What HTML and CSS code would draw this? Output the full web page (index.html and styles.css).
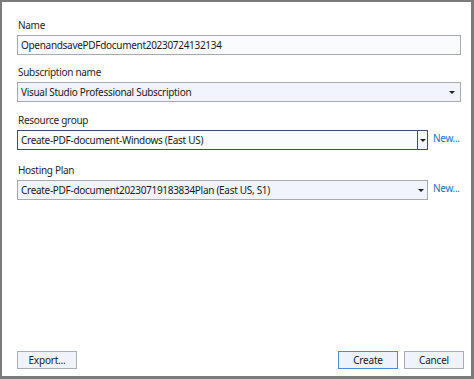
FILE: index.html
```html
<!DOCTYPE html>
<html lang="en">
<head>
    <meta charset="UTF-8">
    <title>Create App Service</title>
    <link rel="stylesheet" href="styles.css">
</head>
<body>
    <div class="dialog">
        <div class="form">
            <div class="field">
                <div class="label">Name</div>
                <div class="row">
                    <div class="input">OpenandsavePDFdocument20230724132134</div>
                </div>
            </div>

            <div class="field">
                <div class="label">Subscription name</div>
                <div class="row">
                    <div class="input select">
                        <span class="value">Visual Studio Professional Subscription</span>
                        <span class="arrow"></span>
                    </div>
                </div>
            </div>

            <div class="field gap-md">
                <div class="label">Resource group</div>
                <div class="row">
                    <div class="input combo focused">
                        <span class="value">Create-PDF-document-Windows (East US)</span>
                        <span class="drop"><span class="arrow"></span></span>
                    </div>
                    <a class="new-link" href="#">New...</a>
                </div>
            </div>

            <div class="field gap-lg">
                <div class="label">Hosting Plan</div>
                <div class="row">
                    <div class="input select short">
                        <span class="value">Create-PDF-document20230719183834Plan (East US, S1)</span>
                        <span class="arrow"></span>
                    </div>
                    <a class="new-link" href="#">New...</a>
                </div>
            </div>
        </div>

        <div class="footer">
            <button class="btn">Export...</button>
            <div class="actions">
                <button class="btn default">Create</button>
                <button class="btn">Cancel</button>
            </div>
        </div>
    </div>
</body>
</html>
```

FILE: styles.css
```css
* {
    margin: 0;
    padding: 0;
    box-sizing: border-box;
}

body {
    width: 474px;
    height: 379px;
    font-family: 'Noto Sans', 'Open Sans', sans-serif;
    font-size: 10px;
    letter-spacing: -0.3px;
    color: #1b1b1b;
    background: #fff;
}

.dialog {
    height: 100%;
    display: flex;
    flex-direction: column;
    border-style: solid;
    border-color: #7b7b7b;
    border-width: 2px 3px 3px 2px;
    background: #fff;
}

.form {
    flex: 1;
    padding: 15px 0 0 15px;
}

.field {
    margin-top: 9px;
}

.field:first-child {
    margin-top: 0;
}

.field.gap-md {
    margin-top: 10px;
}

.field.gap-lg {
    margin-top: 12px;
}

.label {
    height: 16px;
    line-height: 16px;
    margin-bottom: 2px;
    padding-left: 1px;
    color: #262626;
}

.row {
    display: flex;
    align-items: center;
}

.input {
    flex-shrink: 0;
    width: 444px;
    height: 20px;
    line-height: 18px;
    padding: 0 3px;
    border: 1px solid #a6a9ae;
    background: #fafbfd;
    white-space: nowrap;
    overflow: hidden;
}

.select {
    display: flex;
    justify-content: space-between;
    align-items: center;
    background: #f1f4fb;
    padding-right: 5px;
}

.select.short {
    width: 411px;
    padding-right: 3px;
}

.combo {
    display: flex;
    align-items: stretch;
    width: 411px;
    padding-right: 0;
    background: #fafbfd;
}

.combo .value {
    flex: 1;
}

.focused {
    border-color: #3f4c67;
}

.drop {
    width: 10px;
    border-left: 1px solid #3f4c67;
    display: flex;
    align-items: center;
    justify-content: center;
    background: #f4f6fa;
}

.arrow {
    width: 0;
    height: 0;
    border-left: 3px solid transparent;
    border-right: 3px solid transparent;
    border-top: 3px solid #222;
}

.new-link {
    margin-left: 5px;
    color: #1c73c2;
    text-decoration: none;
    line-height: 16px;
    margin-top: -4px;
}

.footer {
    display: flex;
    justify-content: space-between;
    align-items: flex-end;
    padding: 0 7px 7px 15px;
}

.actions {
    display: flex;
    gap: 6px;
}

.btn {
    width: 60px;
    height: 18px;
    font-family: inherit;
    font-size: 10px;
    letter-spacing: -0.2px;
    color: #1b1b1b;
    background: #f0f3fa;
    border: 1px solid #a9adb5;
}

.btn.default {
    border-color: #4a8cd6;
    background: #eef3fb;
}
```
